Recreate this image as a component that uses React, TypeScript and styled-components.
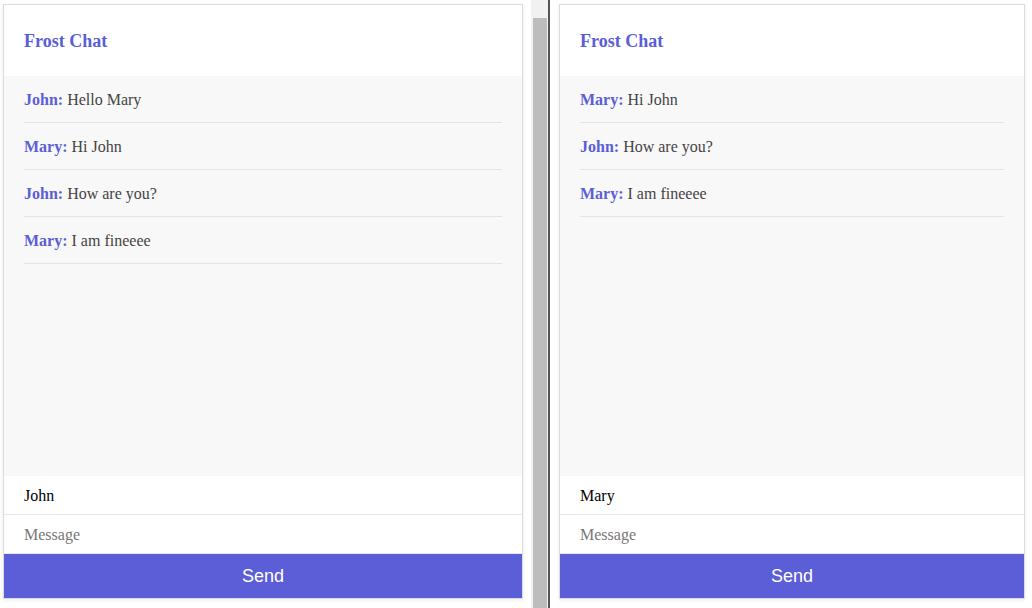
import React, { useState } from "react";
import styled, { createGlobalStyle } from "styled-components";

type Message = { author: string; text: string };

const PURPLE = "#5b5ed6";

const GlobalStyle = createGlobalStyle`
  html, body {
    margin: 0;
    padding: 0;
    background: #fff;
    font-family: "Liberation Serif", "Times New Roman", serif;
    overflow: hidden;
  }
`;

function ChatWindow({
  user,
  messages,
  onSend,
}: {
  user: string;
  messages: Message[];
  onSend: (m: Message) => void;
}) {
  const [name, setName] = useState(user);
  const [text, setText] = useState("");

  const send = () => {
    if (!text.trim()) return;
    onSend({ author: name, text });
    setText("");
  };

  return (
    <ChatBox>
      <Header>
        <Title>Frost Chat</Title>
      </Header>
      <MessageList>
        {messages.map((m, i) => (
          <MessageRow key={i}>
            <Author>{m.author}:</Author> {m.text}
          </MessageRow>
        ))}
      </MessageList>
      <Field value={name} onChange={(e) => setName(e.target.value)} />
      <Field
        placeholder="Message"
        value={text}
        onChange={(e) => setText(e.target.value)}
        onKeyDown={(e) => e.key === "Enter" && send()}
      />
      <SendButton onClick={send}>Send</SendButton>
    </ChatBox>
  );
}

export default function App() {
  const [left, setLeft] = useState<Message[]>([
    { author: "John", text: "Hello Mary" },
    { author: "Mary", text: "Hi John" },
    { author: "John", text: "How are you?" },
    { author: "Mary", text: "I am fineeee" },
  ]);
  const [right, setRight] = useState<Message[]>([
    { author: "Mary", text: "Hi John" },
    { author: "John", text: "How are you?" },
    { author: "Mary", text: "I am fineeee" },
  ]);

  return (
    <>
      <GlobalStyle />
      <Page>
        <LeftPane>
          <ChatWindow user="John" messages={left} onSend={(m) => setLeft([...left, m])} />
          <ScrollTrack>
            <ScrollThumb />
          </ScrollTrack>
        </LeftPane>
        <Divider />
        <RightPane>
          <ChatWindow user="Mary" messages={right} onSend={(m) => setRight([...right, m])} />
        </RightPane>
      </Page>
    </>
  );
}

// styles
const Page = styled.div`
  display: flex;
  width: 1032px;
  height: 608px;
  overflow: hidden;
`;

const LeftPane = styled.div`
  display: flex;
  width: 548px;
  padding: 4px 0 0 3px;
  box-sizing: border-box;
  gap: 8px;
`;

const RightPane = styled.div`
  display: flex;
  flex: 1;
  padding: 4px 0 0 9px;
  box-sizing: border-box;
`;

const ScrollTrack = styled.div`
  width: 17px;
  margin-top: -4px;
  height: 608px;
  background: #f1f1f1;
  padding: 18px 1px 0 2px;
  box-sizing: border-box;
  display: flex;
`;

const ScrollThumb = styled.div`
  flex: 1;
  background: #bdbdbd;
`;

const Divider = styled.div`
  width: 2px;
  height: 608px;
  background: #555;
`;

const ChatBox = styled.div`
  display: flex;
  flex-direction: column;
  height: 595px;
  border: 1px solid #dcdcdc;
  box-sizing: border-box;
  box-shadow: 0 1px 4px rgba(0, 0, 0, 0.08);
  background: #fff;
  width: 520px;

  ${RightPane} & {
    width: 466px;
  }
`;

const Header = styled.div`
  height: 71px;
  display: flex;
  align-items: center;
  padding: 2px 20px 0;
  box-sizing: border-box;
  flex-shrink: 0;
`;

const Title = styled.h1`
  margin: 0;
  font-size: 18px;
  font-weight: bold;
  color: ${PURPLE};
`;

const MessageList = styled.div`
  height: 400px;
  flex-shrink: 0;
  background: #f8f8f8;
  padding: 0 20px;
  box-sizing: border-box;
  overflow-y: auto;
`;

const MessageRow = styled.div`
  padding: 15px 0 13px;
  line-height: 18px;
  font-size: 16px;
  color: #444;
  border-bottom: 1px solid #e4e4e4;
`;

const Author = styled.b`
  color: ${PURPLE};
`;

const Field = styled.input`
  height: 39px;
  flex-shrink: 0;
  border: none;
  border-bottom: 1px solid #e8e8e8;
  padding: 1px 20px 0;
  font-family: "Liberation Serif", "Times New Roman", serif;
  font-size: 16px;
  color: #000;
  outline: none;
  box-sizing: border-box;

  &::placeholder {
    color: #777;
  }
`;

const SendButton = styled.button`
  flex: 1;
  border: none;
  background: ${PURPLE};
  color: #fff;
  font-family: "Liberation Sans", Arial, sans-serif;
  font-size: 18px;
  cursor: pointer;
`;
